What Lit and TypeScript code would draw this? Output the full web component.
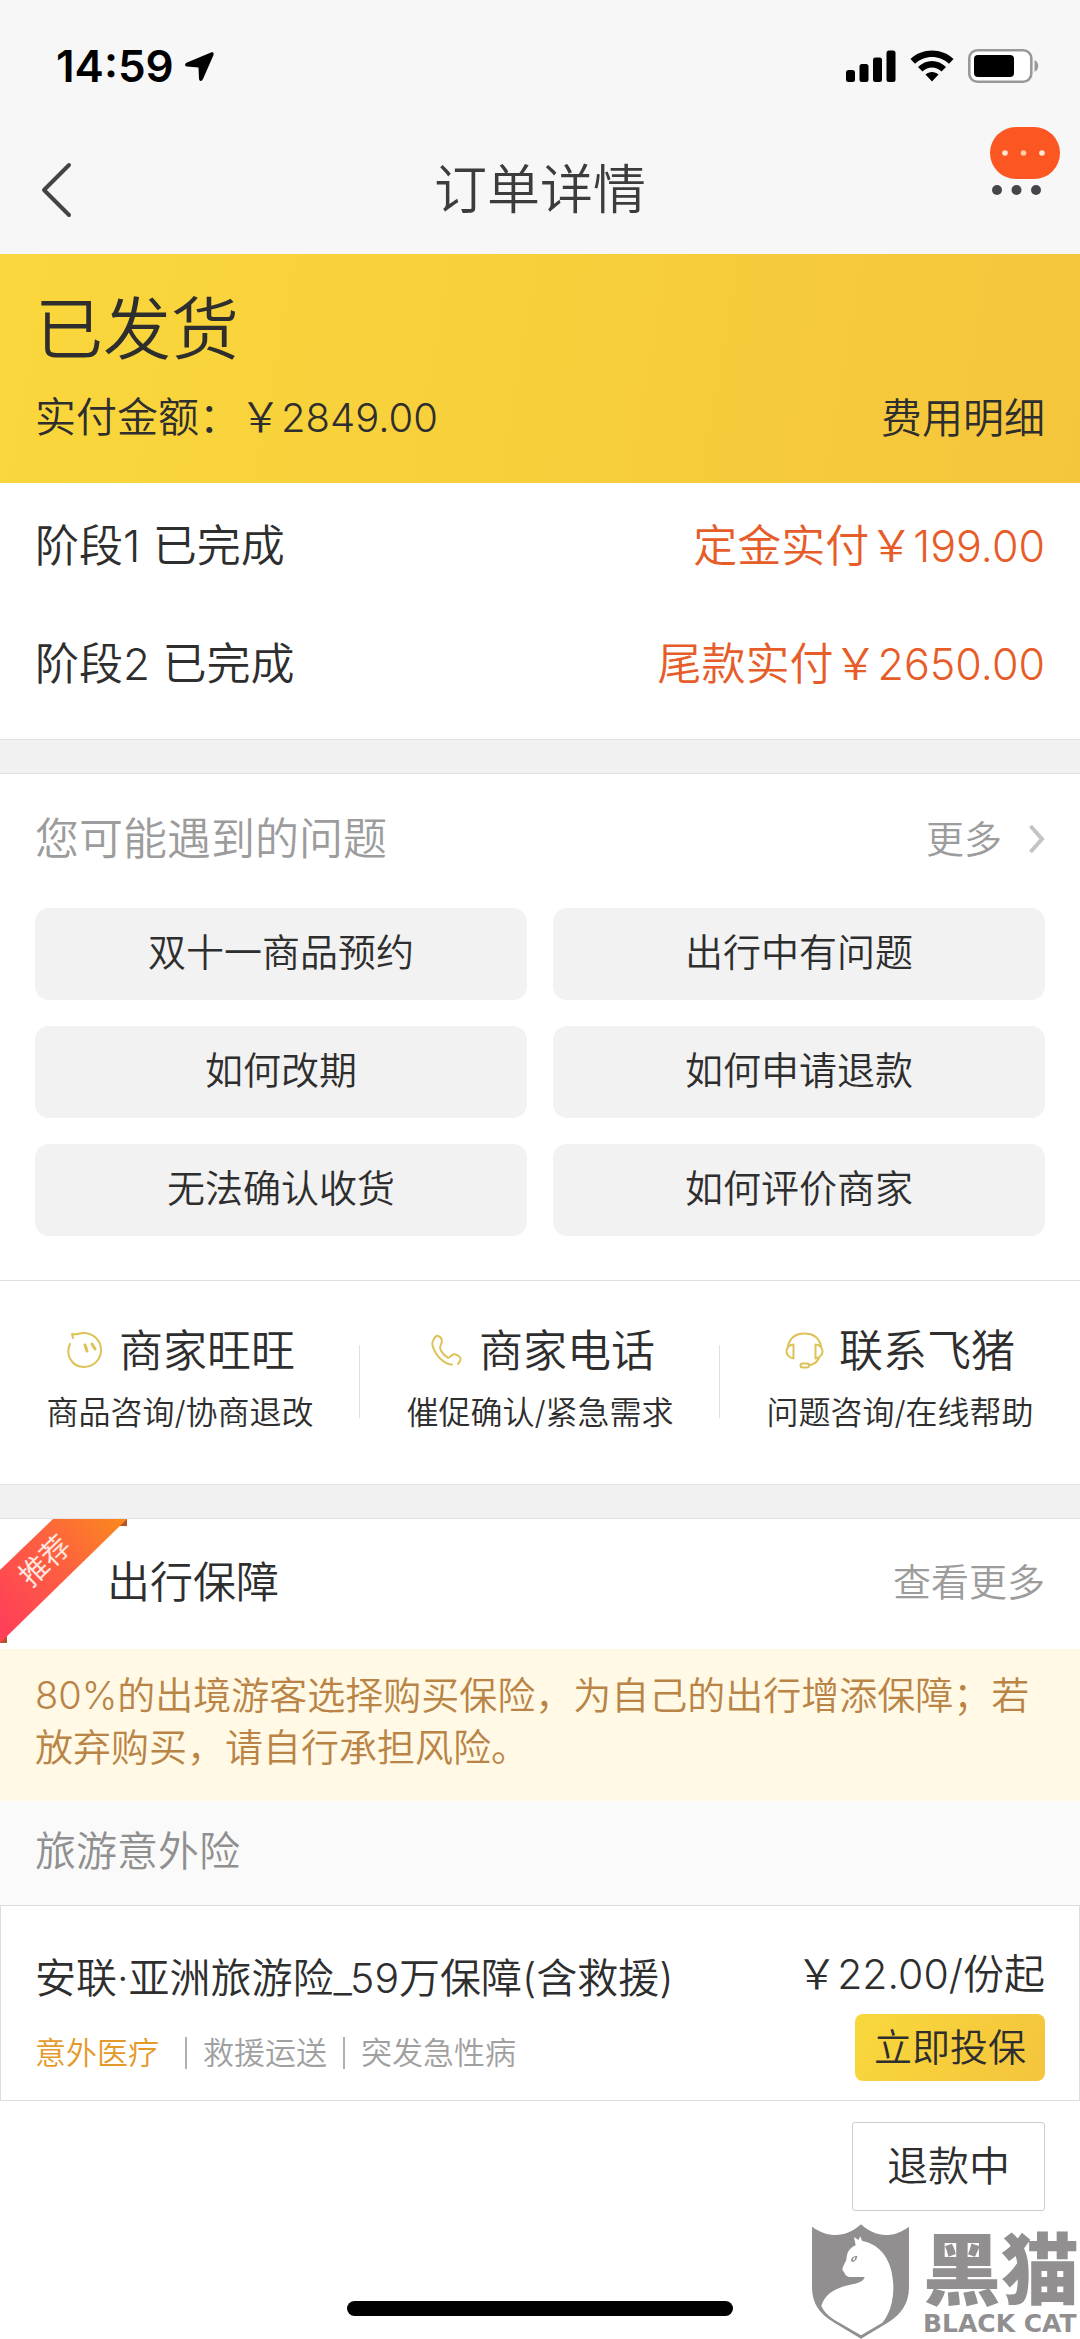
import { LitElement, html, css, svg } from "lit";
import { customElement } from "lit/decorators.js";

interface Stage {
  name: string;
  label: string;
  amount: string;
}

interface Service {
  title: string;
  hint: string;
  icon: unknown;
}

const stages: Stage[] = [
  { name: "阶段1 已完成", label: "定金实付￥", amount: "199.00" },
  { name: "阶段2 已完成", label: "尾款实付￥", amount: "2650.00" },
];

const questions = [
  "双十一商品预约",
  "出行中有问题",
  "如何改期",
  "如何申请退款",
  "无法确认收货",
  "如何评价商家",
];

const services: Service[] = [
  {
    title: "商家旺旺",
    hint: "商品咨询/协商退改",
    icon: svg`
      <path d="M5 13 C0 24 7 36 19 36 C29 36 36 28 36 19 C36 9 28 2 18 2 C14 2 11 4 7 3 L8 7" />
      <path d="M20 14 L22 20 M27 13 L30 18" stroke-width="3" />`,
  },
  {
    title: "商家电话",
    hint: "催促确认/紧急需求",
    icon: svg`
      <path d="M27 33.5 C22 34 14 28 10.600 21.700 C8 17 6 13 8 10 C9 7 11 4 13 5 C16 6 17 9 16.800 11 C16.500 14 14 15 15.400 18.300 C17 22 20 25 22.700 26.700 C25 28 26 23 29.500 23.300 C32 23.500 36 26 35.700 28 C35.500 30 34 31 33 33" />`,
  },
  {
    title: "联系飞猪",
    hint: "问题咨询/在线帮助",
    icon: svg`
      <path d="M3 15 C5 7 11 2.500 19.500 2.500 C28 2.500 34 7 36 15" />
      <path d="M8.500 13.500 V27.500 C4 27 1.200 23 1.500 20 C1.800 17 4 14 8.500 13.500 Z" />
      <path d="M30.500 13.500 V27.500 C35 27 37.800 23 37.500 20 C37.200 17 35 14 30.500 13.500 Z" />
      <path d="M34 27 C32 31 29 34 24 34" />
      <rect x="15.500" y="32.500" width="8.500" height="4" rx="2" />`,
  },
];

@customElement("app-root")
export class AppRoot extends LitElement {
  static styles = css`
    :host {
      display: block;
      font-family: Inter, "Noto Sans CJK SC", sans-serif;
      font-weight: 350;
      color: #2e2e2e;
      background: #fff;
    }
    * {
      box-sizing: border-box;
    }
    h1,
    h2,
    p {
      margin: 0;
      font-weight: inherit;
    }
    svg {
      display: block;
      flex: none;
    }
    button {
      font: inherit;
      color: inherit;
      background: none;
      border: 0;
      padding: 0;
      cursor: pointer;
    }
    a {
      color: inherit;
      text-decoration: none;
    }
    .page {
      position: relative;
      display: flex;
      flex-direction: column;
      min-height: 100vh;
    }
    .top {
      background: #f7f7f7;
    }
    .status {
      display: flex;
      align-items: center;
      justify-content: space-between;
      height: 126px;
      padding: 6px 40px 0 56px;
      color: #000;
    }
    .clock,
    .signals {
      display: flex;
      align-items: center;
    }
    .clock {
      gap: 11px;
      font-size: 44px;
      font-weight: 600;
    }
    .signals {
      gap: 14px;
    }
    .nav {
      display: grid;
      grid-template-columns: 1fr auto 1fr;
      align-items: center;
      height: 128px;
      padding: 0 20px;
    }
    .nav h1 {
      font-size: 53px;
      line-height: 62px;
      color: #3c3c3c;
    }
    .back {
      justify-self: start;
      padding-left: 16px;
    }
    .more-menu {
      position: relative;
      justify-self: end;
      align-self: stretch;
      display: flex;
      align-items: center;
    }
    .bubble {
      position: absolute;
      top: 0;
      left: 0;
    }
    .hero {
      display: flex;
      flex-direction: column;
      gap: 34px;
      padding: 41px 35px 45px;
      background: linear-gradient(100deg, #fad73c, #f7cf3b 50%, #f5c53c);
    }
    .state {
      font-size: 68px;
      line-height: 68px;
    }
    .line {
      display: flex;
      align-items: center;
      justify-content: space-between;
    }
    .paid {
      font-size: 41px;
      line-height: 40px;
    }
    .paid .num {
      font-size: 40px;
    }
    .stages {
      padding: 1px 35px 19px;
    }
    .stage {
      height: 118px;
      font-size: 44px;
    }
    .amount {
      color: #e65d29;
    }
    .stage .num {
      font-size: 43px;
    }
    .band {
      height: 35px;
      background: #f1f1f1;
      border: solid #e2e2e2;
      border-width: 1px 0;
    }
    .faq {
      padding: 43px 35px 44px;
      border-bottom: 1px solid #e0e0e0;
    }
    .faq-head {
      margin-bottom: 47px;
      line-height: 44px;
      color: #9c9c9c;
    }
    .faq-head h2 {
      font-size: 44px;
    }
    .link {
      display: flex;
      align-items: center;
      gap: 27px;
      font-size: 38px;
      color: #9c9c9c;
    }
    .questions {
      display: grid;
      grid-template-columns: 1fr 1fr;
      gap: 26px;
    }
    .question {
      height: 92px;
      padding-bottom: 9px;
      border-radius: 14px;
      background: #f2f2f2;
      font-size: 38px;
    }
    .services {
      display: grid;
      grid-template-columns: repeat(3, 1fr);
      padding: 46px 0 53px;
    }
    .service {
      display: flex;
      flex-direction: column;
      align-items: center;
      gap: 20px;
      background: linear-gradient(#e0e0e0, #e0e0e0) right 18px / 1px 73px no-repeat;
    }
    .service:last-child {
      background: none;
    }
    .service-title {
      display: flex;
      align-items: center;
      gap: 14px;
      font-size: 44px;
      line-height: 48px;
    }
    .service-title svg {
      fill: none;
      stroke: #dcc257;
      stroke-width: 2;
      stroke-linecap: round;
      stroke-linejoin: round;
    }
    .service-hint {
      font-size: 32px;
      line-height: 36px;
    }
    .cover-head {
      position: relative;
      height: 130px;
      padding: 0 35px 10px 107px;
    }
    .cover-head h2 {
      font-size: 43px;
    }
    .ribbon {
      position: absolute;
      top: 0;
      left: 0;
    }
    .notice {
      padding: 20px 35px 28px;
      background: #fff9e5;
      color: #b98446;
      font-size: 38px;
      line-height: 52px;
    }
    .kind {
      display: flex;
      align-items: center;
      height: 104px;
      padding: 0 35px 10px;
      background: #fafafa;
      color: #909090;
      font-size: 41px;
    }
    .plan {
      display: flex;
      justify-content: space-between;
      padding: 46px 34px 19px;
      border: 1px solid #ddd;
    }
    .plan-info {
      display: flex;
      flex-direction: column;
      gap: 35px;
      padding-top: 4px;
    }
    .plan-name,
    .price {
      font-size: 41px;
      line-height: 44px;
    }
    .tags {
      display: flex;
      align-items: center;
      gap: 16px;
      font-size: 31px;
      line-height: 36px;
      color: #a0a0a0;
    }
    .tag + .tag {
      display: flex;
      align-items: center;
      gap: 16px;
    }
    .tag + .tag::before {
      content: "";
      width: 2px;
      height: 32px;
      background: #b0b0b0;
    }
    .tag.main {
      margin-right: 10px;
      color: #e49a2a;
    }
    .plan-buy {
      display: flex;
      flex-direction: column;
      align-items: flex-end;
      gap: 18px;
    }
    .buy {
      height: 67px;
      padding: 0 19px 6px;
      border-radius: 8px;
      background: linear-gradient(120deg, #f8d83b, #f4c43d);
      font-size: 38px;
    }
    .foot {
      flex: 1;
      display: flex;
      flex-direction: column;
      justify-content: space-between;
      align-items: center;
      padding: 21px 35px 23px;
    }
    .refund {
      align-self: flex-end;
      height: 89px;
      padding: 0 34px 7px;
      border: 1px solid #ccc;
      border-radius: 3px;
      font-size: 41px;
    }
    .home {
      width: 386px;
      height: 15px;
      border-radius: 8px;
      background: #000;
    }
    .mark {
      position: absolute;
      right: 1px;
      bottom: 0;
      display: flex;
      align-items: flex-end;
      gap: 14px;
      color: #918f90;
    }
    .mark-text {
      display: flex;
      flex-direction: column;
      gap: 9px;
      padding-bottom: 3px;
    }
    .mark-cn {
      font-family: "Noto Sans CJK SC", sans-serif;
      font-size: 78px;
      line-height: 76px;
      font-weight: 900;
    }
    .mark-en {
      font-family: "DejaVu Sans", sans-serif;
      font-size: 25px;
      line-height: 24px;
      font-weight: 700;
    }
  `;

  private renderStatus() {
    return html`
      <div class="status">
        <div class="clock">
          <span>14:59</span>
          <svg width="29" height="29" viewBox="0 0 29 29" aria-hidden="true">
            <path d="M26 0.500 L2 10.500 C-1 12 0 14.300 2 14.500 L13.500 15.500 L14 27 C14.500 29.500 17 29.500 18 27 L28.500 3 C29 1 28 0 26 0.500 Z" />
          </svg>
        </div>
        <div class="signals">
          <svg width="50" height="32" viewBox="0 0 50 32" aria-hidden="true">
            <rect x="0" y="20" width="9" height="12" rx="2.500" />
            <rect x="13.500" y="14" width="9" height="18" rx="2.500" />
            <rect x="27" y="7.500" width="9" height="24.500" rx="2.500" />
            <rect x="40.500" y="0.500" width="9" height="31.500" rx="2.500" />
          </svg>
          <svg width="44" height="32" viewBox="0 0 44 32" aria-hidden="true">
            <path d="M0.500 9 C12 -2.500 32 -2.500 43.500 9 L39 13.800 C29.500 4.800 14.500 4.800 5 13.800 Z" />
            <path d="M8 17 C16 9 28 9 36 17 L31.500 21.500 C26 16 18 16 12.500 21.500 Z" />
            <path d="M15.500 24.500 C19 21 25 21 28.500 24.500 L22 31.500 Z" />
          </svg>
          <svg width="72" height="34" viewBox="0 0 72 34" aria-hidden="true">
            <rect x="1.300" y="1.300" width="62" height="31.400" rx="8" fill="#fff" stroke="#999" stroke-width="2.600" />
            <rect x="6" y="6" width="40" height="22" rx="4" />
            <path d="M66.500 11 C71.500 13.500 71.500 20.500 66.500 23 Z" fill="#999" />
          </svg>
        </div>
      </div>
    `;
  }

  private renderNav() {
    return html`
      <nav class="nav">
        <button class="back" aria-label="返回">
          <svg width="40" height="56" viewBox="0 0 40 56" fill="none" stroke="#444" stroke-width="4" stroke-linecap="round" stroke-linejoin="round">
            <path d="M33 3 L8 28 L33 53" />
          </svg>
        </button>
        <h1>订单详情</h1>
        <button class="more-menu" aria-label="更多">
          <svg width="70" height="12" viewBox="0 0 70 12" fill="#46464a">
            <circle cx="7" cy="6" r="5" />
            <circle cx="26.500" cy="6" r="5" />
            <circle cx="46" cy="6" r="5" />
          </svg>
          <svg class="bubble" width="70" height="54" viewBox="0 0 70 54">
            <rect y="1" width="70" height="52" rx="26" fill="#fc5622" />
            <circle cx="15" cy="27" r="2.800" fill="#ffe9d6" />
            <circle cx="33.500" cy="27" r="2.800" fill="#ffd0a8" />
            <circle cx="52" cy="27" r="2.800" fill="#ffe9d6" />
          </svg>
        </button>
      </nav>
    `;
  }

  private renderFaq() {
    return html`
      <section class="faq">
        <div class="line faq-head">
          <h2>您可能遇到的问题</h2>
          <a class="link" href="#more">
            更多
            <svg width="16" height="30" viewBox="0 0 16 30" fill="none" stroke="#c4c4c4" stroke-width="4">
              <path d="M1.500 2 L13 15 L1.500 28" />
            </svg>
          </a>
        </div>
        <div class="questions">
          ${questions.map((q) => html`<button class="question">${q}</button>`)}
        </div>
      </section>
    `;
  }

  private renderCover() {
    return html`
      <section>
        <div class="line cover-head">
          <svg class="ribbon" width="127" height="124" viewBox="0 0 127 124" role="img">
            <defs>
              <linearGradient id="ribbon-fill" x1="0" y1="0.800" x2="1" y2="0">
                <stop offset="0" stop-color="#ff4058" />
                <stop offset="0.500" stop-color="#fd6040" />
                <stop offset="1" stop-color="#fb8a1c" />
              </linearGradient>
            </defs>
            <path d="M119 0 H127 V7 H119 Z M0 116 H7 V124 H0 Z" fill="#b5542a" />
            <path d="M53 0 H127 L0 124 V51 Z" fill="url(#ribbon-fill)" />
            <text x="45" y="52" transform="rotate(-44 45 42)" text-anchor="middle" font-size="29" font-weight="400" fill="#ffe6df">推荐</text>
          </svg>
          <h2>出行保障</h2>
          <a class="link" href="#cover">查看更多</a>
        </div>
        <p class="notice">80%的出境游客选择购买保险，为自己的出行增添保障；若放弃购买，请自行承担风险。</p>
        <div class="kind">旅游意外险</div>
        <div class="plan">
          <div class="plan-info">
            <div class="plan-name">安联·亚洲旅游险_59万保障(含救援)</div>
            <div class="tags">
              <span class="tag main">意外医疗</span>
              <span class="tag">救援运送</span>
              <span class="tag">突发急性病</span>
            </div>
          </div>
          <div class="plan-buy">
            <div class="price">￥22.00/份起</div>
            <button class="buy">立即投保</button>
          </div>
        </div>
      </section>
    `;
  }

  private renderMark() {
    return html`
      <div class="mark">
        <svg width="97" height="115" viewBox="93 72 291 345" aria-hidden="true">
          <path fill="#918f90" d="M93 80 C140 114 195 115 240 73 C285 115 338 114 384 80 V262 C384 310 360 345 320 368 L240 416 L160 368 C115 342 93 310 93 262 Z" />
          <path fill="#fff" d="M219 111 L224 136 C204 144 197 160 196 180 C190 192 184 202 184 210 C188 214 190 218 192 222 C196 230 206 232 214 231 L251 231 C248 245 230 250 205 255 C160 264 130 285 121 318 C132 342 150 354 175 368 L240 406 L304 368 C328 340 338 300 337 255 C334 180 300 134 243 122 L238 109 L232 120 Z" />
          <path fill="#918f90" d="M210 181 C211 172 218 168 229 167 C228 178 222 186 212 185 Z" />
          <path fill="#fff" d="M215 180 C216 175 220 172 223 171 L221 181 Z" />
        </svg>
        <div class="mark-text">
          <span class="mark-cn">黑猫</span>
          <span class="mark-en">BLACK CAT</span>
        </div>
      </div>
    `;
  }

  render() {
    return html`
      <main class="page">
        <header class="top">${this.renderStatus()} ${this.renderNav()}</header>
        <section class="hero">
          <div class="state">已发货</div>
          <div class="line paid">
            <span>实付金额：￥<span class="num">2849.00</span></span>
            <a href="#fees">费用明细</a>
          </div>
        </section>
        <section class="stages">
          ${stages.map(
            (s) => html`
              <div class="line stage">
                <span>${s.name}</span>
                <span class="amount">${s.label}<span class="num">${s.amount}</span></span>
              </div>
            `
          )}
        </section>
        <div class="band"></div>
        ${this.renderFaq()}
        <section class="services">
          ${services.map(
            (s) => html`
              <a class="service" href="#service">
                <span class="service-title">
                  <svg width="40" height="40" viewBox="0 0 40 40" aria-hidden="true">${s.icon}</svg>
                  ${s.title}
                </span>
                <span class="service-hint">${s.hint}</span>
              </a>
            `
          )}
        </section>
        <div class="band"></div>
        ${this.renderCover()}
        <footer class="foot">
          <button class="refund">退款中</button>
          <div class="home"></div>
        </footer>
        ${this.renderMark()}
      </main>
    `;
  }
}
